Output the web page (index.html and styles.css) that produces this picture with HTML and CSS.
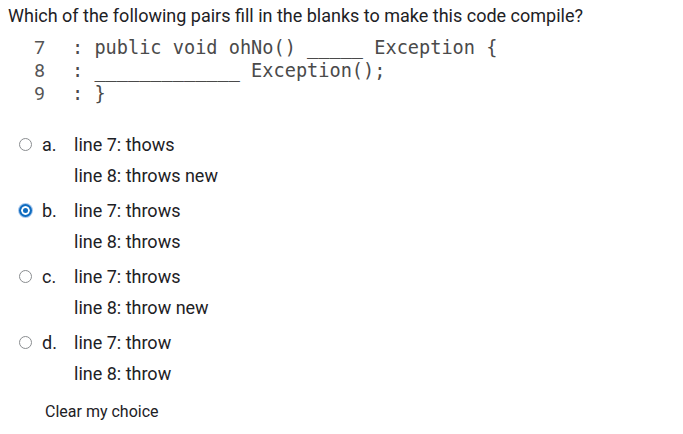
FILE: index.html
```
<!DOCTYPE html>
<html>
<head>
<meta charset="utf-8">
<link rel="stylesheet" href="styles.css">
</head>
<body>
<div class="q">
  <p class="qtext">Which of the following pairs fill in the blanks to make this code compile?</p>
  <div class="code">
    <span class="ln">7</span><span class="src">: public void ohNo() _____ Exception {</span>
    <span class="ln">8</span><span class="src">: _____________ Exception();</span>
    <span class="ln">9</span><span class="src">: }</span>
  </div>
  <div class="answers">
    <div class="opt">
      <span class="radio"></span><span class="letter">a.</span>
      <div class="txt"><div>line 7: thows</div><div>line 8: throws new</div></div>
    </div>
    <div class="opt">
      <span class="radio checked"></span><span class="letter">b.</span>
      <div class="txt"><div>line 7: throws</div><div>line 8: throws</div></div>
    </div>
    <div class="opt">
      <span class="radio"></span><span class="letter">c.</span>
      <div class="txt"><div>line 7: throws</div><div>line 8: throw new</div></div>
    </div>
    <div class="opt">
      <span class="radio"></span><span class="letter">d.</span>
      <div class="txt"><div>line 7: throw</div><div>line 8: throw</div></div>
    </div>
  </div>
  <div class="clear">Clear my choice</div>
</div>
</body>
</html>
```
FILE: styles.css
```
html, body {
  margin: 0;
  padding: 0;
  background: #fff;
}
body {
  font-family: Roboto, "Liberation Sans", sans-serif;
  color: #1d2125;
}
.q {
  padding: 4px 0 0 8px;
}
.qtext {
  margin: 0;
  font-size: 18px;
  line-height: 24px;
}
.code {
  display: grid;
  grid-template-columns: 67px auto;
  margin-top: 8px;
  line-height: 23px;
}
.ln {
  font-size: 19px;
  color: #555;
  text-align: right;
  padding-right: 30px;
}
.src {
  font-family: "DejaVu Sans Mono", monospace;
  font-size: 18.6px;
  color: #4a4a4a;
  white-space: pre;
  margin-left: -3px;
}
.answers {
  margin-top: 24px;
  display: flex;
  flex-direction: column;
  gap: 4px;
}
.opt {
  display: flex;
  align-items: flex-start;
  font-size: 18px;
  line-height: 31px;
}
.radio {
  box-sizing: border-box;
  width: 13px;
  height: 13px;
  border: 1px solid #8a8d90;
  border-radius: 50%;
  margin: 9px 0 0 11px;
  flex: none;
}
.radio.checked {
  border: 2px solid #0f6cbf;
  background: #0f6cbf;
  box-shadow: inset 0 0 0 2px #fff, 0 0 0 1px #a8c8ee;
}
.letter {
  width: 42px;
  padding-left: 10px;
  box-sizing: border-box;
  color: #1d2125;
}
.txt {
  display: flex;
  flex-direction: column;
}
.clear {
  margin: 13px 0 0 37px;
  font-size: 16px;
  line-height: 20px;
}
```
